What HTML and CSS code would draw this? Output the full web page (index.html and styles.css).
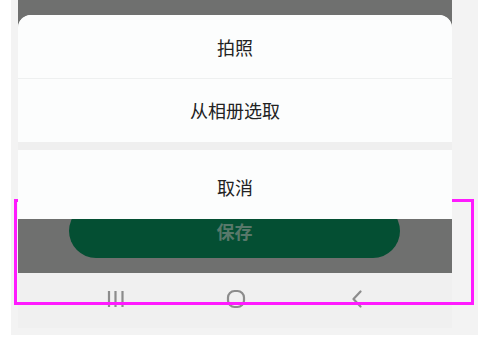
FILE: index.html
```html
<!DOCTYPE html>
<html lang="zh-CN">
<head>
<meta charset="utf-8">
<title>选择图片</title>
<link rel="stylesheet" href="styles.css">
</head>
<body>
<div class="frame">
  <div class="screen">
    <div class="overlay">
      <div class="sheet">
        <div class="sheet-item first">拍照</div>
        <div class="sheet-item second">从相册选取</div>
        <div class="sheet-gap"></div>
        <div class="sheet-item cancel">取消</div>
      </div>
      <div class="save-area">
        <div class="save-btn">保存</div>
      </div>
    </div>
    <div class="navbar">
      <div class="nav-cell">
        <svg class="nav-icon" width="18" height="18" viewBox="0 0 18 18">
          <path d="M3 1v16M9.5 1v16M16.5 1v16" stroke="#8c8c8c" stroke-width="2.2" fill="none"/>
        </svg>
      </div>
      <div class="nav-cell">
        <svg class="nav-icon" width="20" height="20" viewBox="0 0 20 20">
          <rect x="2" y="2" width="16" height="16" rx="6.5" ry="6.5" stroke="#8c8c8c" stroke-width="2.2" fill="none"/>
        </svg>
      </div>
      <div class="nav-cell">
        <svg class="nav-icon" width="14" height="18" viewBox="0 0 14 18">
          <path d="M10.5 1.5L3.5 9l7 7.5" stroke="#8c8c8c" stroke-width="2.2" fill="none" stroke-linecap="round" stroke-linejoin="round"/>
        </svg>
      </div>
    </div>
  </div>
</div>
<div class="highlight"></div>
</body>
</html>
```

FILE: styles.css
```css
html, body {
  margin: 0;
  padding: 0;
  background: #ffffff;
  font-family: "Noto Sans CJK SC", "Noto Sans", sans-serif;
}

.frame {
  margin-left: 11px;
  width: 460px;
  height: 335px;
  padding-left: 7px;
  background: #f3f3f3;
}

.screen {
  width: 434px;
  display: flex;
  flex-direction: column;
}

.overlay {
  height: 273px;
  padding-top: 15px;
  box-sizing: border-box;
  background: #6f706f;
  display: flex;
  flex-direction: column;
}

.sheet {
  position: relative;
  z-index: 2;
  background: #fcfdfd;
  border-radius: 13px 13px 0 0;
  overflow: hidden;
  display: flex;
  flex-direction: column;
}

.sheet-item {
  display: flex;
  align-items: center;
  justify-content: center;
  font-size: 18px;
  color: #222222;
  background: #fcfdfd;
}

.first {
  height: 62px;
  border-bottom: 1px solid #eef0f0;
  padding-top: 1px;
  box-sizing: content-box;
}

.second {
  height: 63px;
  padding-bottom: 1px;
  box-sizing: border-box;
}

.sheet-gap {
  height: 9px;
  background: #efefef;
}

.cancel {
  height: 69px;
  padding-top: 5px;
  box-sizing: border-box;
}

.save-area {
  height: 54px;
  overflow: hidden;
}

.save-btn {
  margin: -15px 0 0 51px;
  width: 331px;
  height: 54px;
  border-radius: 27px;
  background: #044f33;
  color: #58786a;
  font-size: 18px;
  font-weight: 700;
  line-height: 54px;
  text-align: center;
}

.navbar {
  height: 55px;
  background: #f0f0f0;
  display: grid;
  grid-template-columns: repeat(3, 1fr);
  padding: 0 34px 0 36px;
}

.nav-cell {
  display: flex;
  align-items: center;
  justify-content: center;
  padding-bottom: 3px;
}

.nav-icon {
  display: block;
}

.highlight {
  position: absolute;
  left: 14px;
  top: 199px;
  width: 454px;
  height: 100px;
  border: 3px solid #ff1aff;
}
```
